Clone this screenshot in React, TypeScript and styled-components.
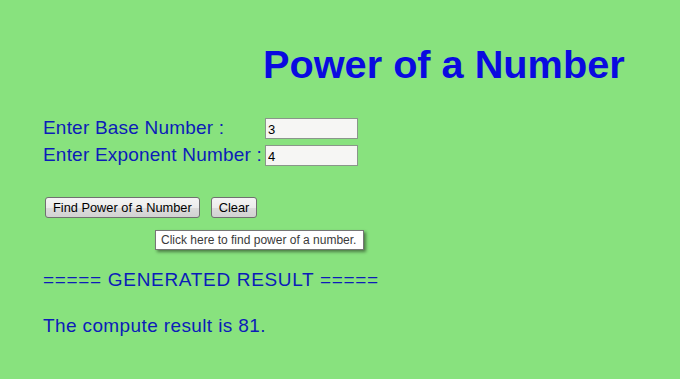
import React from "react";
import styled, { createGlobalStyle } from "styled-components";

const Global = createGlobalStyle`
  html, body {
    margin: 0;
    padding: 0;
    background: #88e27e;
  }
  body {
    font-family: "Liberation Sans", Arial, sans-serif;
  }
`;

const Page = styled.div`
  width: 680px;
  height: 379px;
  box-sizing: border-box;
  padding: 41px 0 0 43px;
  background: #88e27e;
  overflow: hidden;
`;

const Title = styled.h1`
  margin: 0 0 31px 220px;
  font-family: "Liberation Sans", Arial, sans-serif;
  font-size: 39.7px;
  font-weight: bold;
  line-height: 46px;
  color: #0a0ae0;
  white-space: nowrap;
`;

const FormGrid = styled.div`
  display: grid;
  grid-template-columns: 220px 93px;
  grid-auto-rows: 21px;
  row-gap: 6px;
  column-gap: 2px;
  align-items: center;
`;

const Label = styled.label`
  font-size: 19px;
  letter-spacing: 0.2px;
  line-height: 22px;
  padding-bottom: 2px;
  color: #0c1cb8;
  white-space: nowrap;
`;

const Field = styled.input`
  box-sizing: border-box;
  width: 93px;
  height: 21px;
  margin: 0;
  padding: 1px 2px 0;
  border: 1px solid #8a968a;
  background: #f6f6f4;
  font-family: "Liberation Sans", Arial, sans-serif;
  font-size: 13px;
  color: #000;
  outline: none;
`;

const ButtonRow = styled.div`
  position: relative;
  display: flex;
  gap: 11px;
  margin-top: 31px;
  padding-left: 2px;
`;

const Button = styled.button`
  box-sizing: border-box;
  height: 21px;
  padding: 0 7px;
  border: 1px solid #707070;
  border-radius: 3px;
  background: linear-gradient(#f4f4f4 0%, #ececec 50%, #dcdcdc 51%, #d2d2d2 100%);
  font-family: "Liberation Sans", Arial, sans-serif;
  font-size: 12.8px;
  color: #000;
  white-space: nowrap;
  cursor: default;
`;

const Tooltip = styled.div`
  position: absolute;
  left: 112px;
  top: 33px;
  box-sizing: border-box;
  width: 209px;
  height: 20px;
  padding: 0 5px;
  border: 1px solid #767676;
  background: #ffffff;
  box-shadow: 2px 2px 3px rgba(0, 0, 0, 0.45);
  font-family: "Liberation Sans", Arial, sans-serif;
  font-size: 12px;
  line-height: 18px;
  color: #3a3a3a;
  white-space: nowrap;
`;

const ResultHeading = styled.div`
  margin-top: 51px;
  font-size: 19px;
  letter-spacing: 0.68px;
  line-height: 22px;
  color: #0c1cb8;
  white-space: nowrap;
`;

const ResultText = styled.div`
  margin-top: 24px;
  font-size: 19px;
  letter-spacing: 0.38px;
  line-height: 22px;
  color: #0c1cb8;
  white-space: nowrap;
`;

export default function App() {
  return (
    <>
      <Global />
      <Page>
        <Title>Power of a Number</Title>
        <FormGrid>
          <Label htmlFor="base">Enter Base Number :</Label>
          <Field id="base" defaultValue="3" />
          <Label htmlFor="exp">Enter Exponent Number :</Label>
          <Field id="exp" defaultValue="4" />
        </FormGrid>
        <ButtonRow>
          <Button>Find Power of a Number</Button>
          <Button>Clear</Button>
          <Tooltip>Click here to find power of a number.</Tooltip>
        </ButtonRow>
        <ResultHeading>===== GENERATED RESULT =====</ResultHeading>
        <ResultText>The compute result is 81.</ResultText>
      </Page>
    </>
  );
}
